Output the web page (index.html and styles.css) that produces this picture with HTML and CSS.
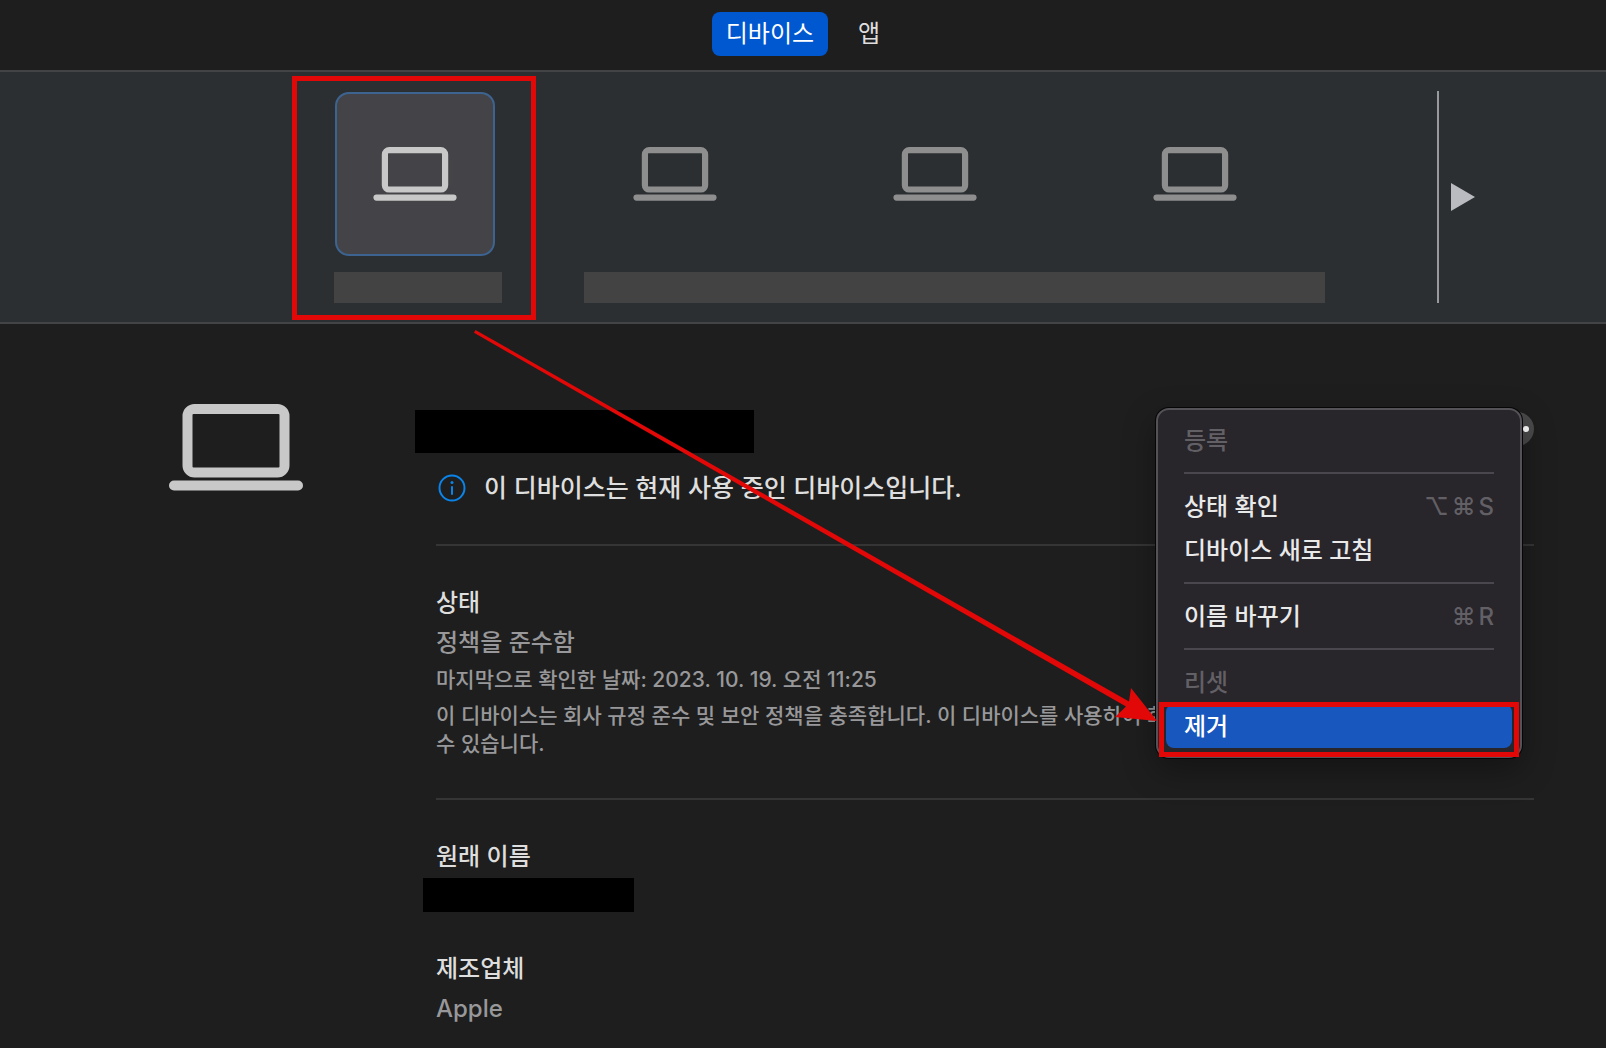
FILE: index.html
```
<!DOCTYPE html>
<html lang="ko">
<head>
<meta charset="utf-8">
<title>디바이스</title>
<link rel="stylesheet" href="styles.css">
</head>

<body>

<svg class="defs" aria-hidden="true">
  <symbol id="laptop" viewBox="0 0 134 87">
    <path fill-rule="evenodd" d="M25.5 0h83a12 12 0 0 1 12 12v49.500a12 12 0 0 1-12 12H25.500a12 12 0 0 1-12-12V12A12 12 0 0 1 25.500 0zM24.500 10a1 1 0 0 0-1 1v51.500a1 1 0 0 0 1 1h85a1 1 0 0 0 1-1V11a1 1 0 0 0-1-1z"/>
    <rect x="0" y="76.500" width="134" height="10" rx="5"/>
  </symbol>
</svg>

<header class="topbar">
  <nav class="tabs">
    <button type="button" class="tab active">디바이스</button>
    <button type="button" class="tab">앱</button>
  </nav>
</header>

<section class="strip">
  <div class="devices">
    <div class="cell marked">
      <button type="button" class="device selected" aria-label="현재 디바이스"><svg><use href="#laptop"/></svg></button>
    </div>
    <div class="cell">
      <button type="button" class="device" aria-label="디바이스 2"><svg><use href="#laptop"/></svg></button>
    </div>
    <div class="cell">
      <button type="button" class="device" aria-label="디바이스 3"><svg><use href="#laptop"/></svg></button>
    </div>
    <div class="cell">
      <button type="button" class="device" aria-label="디바이스 4"><svg><use href="#laptop"/></svg></button>
    </div>
    <div class="name-mask first"></div>
    <div class="name-mask rest"></div>
  </div>
  <button type="button" class="next" aria-label="다음">
    <svg width="24" height="28" viewBox="0 0 24 28"><path d="M0 0l24 14L0 28z"/></svg>
  </button>
</section>

<main class="detail">
  <svg class="detail-icon"><use href="#laptop"/></svg>

  <div class="info">
    <div class="title-row">
      <div class="mask title-mask"></div>
      <button type="button" class="more" aria-label="더 보기">
        <svg width="34" height="34" viewBox="0 0 34 34"><circle cx="8" cy="17" r="3"/><circle cx="17" cy="17" r="3"/><circle cx="26" cy="17" r="3"/></svg>
      </button>

      <div class="menu">
        <button type="button" class="item" disabled>등록</button>
        <hr>
        <button type="button" class="item">상태 확인 <kbd><span>⌥</span><span>⌘</span><span>S</span></kbd></button>
        <button type="button" class="item">디바이스 새로 고침</button>
        <hr>
        <button type="button" class="item">이름 바꾸기 <kbd><span>⌘</span><span>R</span></kbd></button>
        <hr>
        <button type="button" class="item" disabled>리셋</button>
        <button type="button" class="item current">제거</button>
      </div>
    </div>

    <p class="notice">
      <svg width="28" height="28" viewBox="0 0 28 28"><circle class="ring" cx="14" cy="14" r="12.5"/><circle cx="14" cy="8.5" r="1.5"/><rect x="13" y="12" width="2" height="9" rx="1"/></svg>
      이 디바이스는 현재 사용 중인 디바이스입니다.
    </p>

    <section class="group">
      <h2>상태</h2>
      <p class="value">정책을 준수함</p>
      <p class="small">마지막으로 확인한 날짜: 2023. 10. 19. 오전 11:25</p>
      <p class="small desc">이 디바이스는 회사 규정 준수 및 보안 정책을 충족합니다. 이 디바이스를 사용하여 회<br>수 있습니다.</p>
    </section>

    <section class="group last">
      <h2>원래 이름</h2>
      <div class="mask name"></div>
      <h2>제조업체</h2>
      <p class="value">Apple</p>
    </section>
  </div>
</main>

<!-- arrow from the selected device to the remove command -->
<svg class="arrow" width="684" height="392" viewBox="0 0 684 392" aria-hidden="true">
  <path d="M1.500 0L655 371.500L657 358L683 391L641 387L652 376.500L0 2.800z"/>
</svg>

</body>
</html>
```
FILE: styles.css
```
*, *::after {
  box-sizing: border-box;
}

body {
  position: relative;
  margin: 0;
  min-height: 100vh;
  overflow-x: hidden;
  background: #1e1e1e;
  color: #dedede;
  font-family: Inter, "Noto Sans CJK KR", sans-serif;
  font-size: 24px;
  line-height: 40px;
}

button {
  margin: 0;
  padding: 0;
  border: 0;
  background: none;
  color: inherit;
  font: inherit;
}

h2, p {
  margin: 0;
  font-size: 24px;
  font-weight: 500;
}

.defs {
  display: none;
}

/* tabs */
.topbar {
  padding: 12px 0 14px;
  border-bottom: 2px solid #434445;
}

.tabs {
  display: flex;
  justify-content: center;
  gap: 16px;
}

.tab {
  height: 44px;
  padding: 0 14px;
  border-radius: 8px;
  line-height: 44px;
}

.tab.active {
  background: #0058d0;
  color: #fff;
}

/* device strip */
.strip {
  display: flex;
  justify-content: space-between;
  padding: 19px 131px 19px 285px;
  border-bottom: 2px solid #434445;
  background: #2b2f31;
}

.devices {
  display: grid;
  grid-template-columns: repeat(4, 260px);
  row-gap: 16px;
  padding-top: 1px;
}

.cell {
  position: relative;
  display: flex;
  justify-content: center;
}

.device {
  display: flex;
  align-items: center;
  justify-content: center;
  width: 160px;
  height: 164px;
  border: 2px solid transparent;
  border-radius: 14px;
}

.device svg {
  width: 84px;
  height: 54px;
  fill: #8e8e8e;
}

.device.selected {
  border-color: #3d6491;
  background: #444448;
}

.device.selected svg {
  fill: #c8c8c8;
}

.marked::after {
  content: "";
  position: absolute;
  top: -16px;
  left: 7px;
  width: 244px;
  height: 244px;
  border: 5px solid #e20808;
}

.name-mask {
  height: 31px;
  background: #434343;
}

.name-mask.first {
  width: 168px;
  margin-left: 49px;
}

.name-mask.rest {
  grid-column: 2 / 5;
  justify-self: end;
  width: 741px;
}

.next {
  display: flex;
  align-items: center;
  padding-left: 12px;
  border-left: 2px solid #98999b;
}

.next svg {
  fill: #b9bbc0;
}

/* detail */
.detail {
  display: flex;
  gap: 133px;
  padding: 80px 72px 0 169px;
}

.detail-icon {
  flex: none;
  width: 134px;
  height: 87px;
  fill: #c8c8c8;
}

.info {
  flex: 1;
  padding-top: 6px;
}

.title-row {
  position: relative;
  display: flex;
  justify-content: space-between;
}

.mask {
  background: #000;
}

.title-mask {
  width: 339px;
  height: 43px;
  margin-left: -21px;
}

.more {
  width: 34px;
  height: 34px;
  margin-top: 2px;
  border-radius: 50%;
  background: #4a4a4a;
}

.more svg {
  display: block;
  fill: #fff;
}

.notice {
  display: flex;
  align-items: center;
  gap: 18px;
  margin-top: 15px;
  padding-left: 2px;
  font-size: 25px;
}

.notice svg {
  fill: #0a84ea;
}

.notice .ring {
  fill: none;
  stroke: #0a84ea;
  stroke-width: 2;
}

.group {
  margin-top: 36px;
  padding-top: 37px;
  border-top: 2px solid #353536;
}

.value, .small {
  color: #98989a;
}

.small {
  font-size: 21px;
  line-height: 28px;
}

.group .small {
  margin-top: 3px;
}

.group .desc {
  margin-top: 8px;
}

.group.last {
  margin-top: 40px;
}

.mask.name {
  width: 211px;
  height: 34px;
  margin: 1px 0 37px -13px;
}

/* context menu */
.menu {
  position: absolute;
  top: -2px;
  right: 12px;
  width: 366px;
  padding: 8px;
  border: 2px solid #545257;
  border-radius: 13px;
  background: #28252b;
  box-shadow: 0 0 0 1px #060606, 0 12px 32px rgba(0, 0, 0, .35);
}

.item {
  position: relative;
  display: flex;
  justify-content: space-between;
  width: 100%;
  height: 44px;
  padding: 1px 18px 0;
  border-radius: 8px;
  color: #e9e9e9;
  font-weight: 500;
  line-height: 44px;
}

.item:disabled, .item kbd {
  color: #626065;
}

.item kbd {
  display: flex;
  gap: 3px;
  font: inherit;
}

.item.current {
  background: #1757be;
  color: #fff;
}

.item.current::after {
  content: "";
  position: absolute;
  inset: -2px -7px -9px;
  border: 5px solid #e20808;
}

.menu hr {
  height: 2px;
  margin: 10px 18px;
  border: 0;
  background: #4a484e;
}

.arrow {
  position: absolute;
  top: 330px;
  left: 474px;
  fill: #e20808;
  pointer-events: none;
}
```
